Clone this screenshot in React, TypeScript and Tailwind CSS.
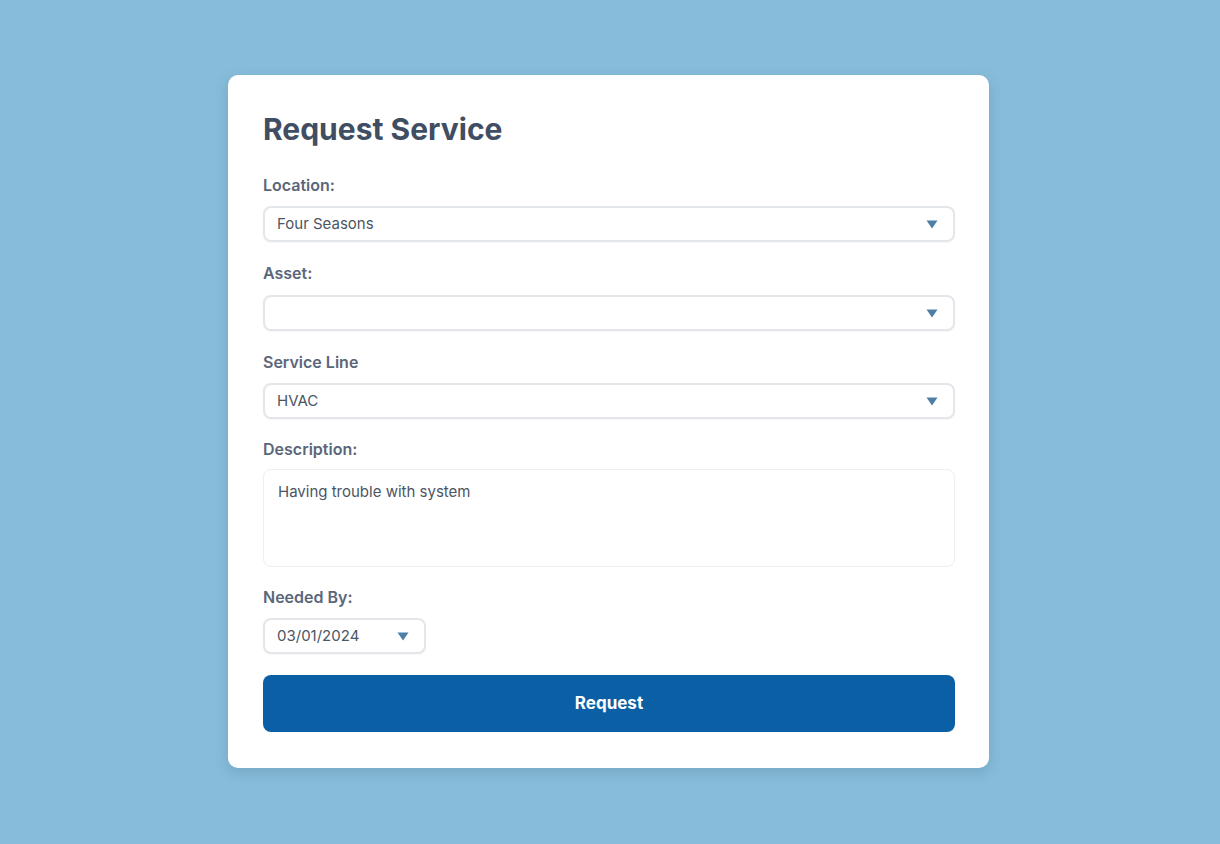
import React from "react"

const Caret = () => (
  <svg width="12" height="9" viewBox="0 0 12 9" className="shrink-0">
    <path d="M0.5 0.5 H11.5 L6 8.5 Z" fill="#4d7ea6" />
  </svg>
)

const Label = ({ children }: { children: React.ReactNode }) => (
  <div className="text-[16px] leading-5 font-semibold text-[#5b6679]">{children}</div>
)

const Select = ({ value, className = "" }: { value?: string; className?: string }) => (
  <div
    className={`flex items-center justify-between h-9 rounded-lg border-2 border-[#e3e6eb] bg-white pl-[12px] pr-[15px] text-[15px] text-[#4b5563] shadow-[0_1px_2px_rgba(0,0,0,0.04)] ${className}`}
  >
    <span>{value}</span>
    <Caret />
  </div>
)

export default function App() {
  return (
    <div
      className="min-h-screen w-full bg-[#87bdda] pt-[75px] pl-[228px]"
      style={{ fontFamily: "Inter, 'Noto Sans', sans-serif" }}
    >
      <div className="w-[761px] h-[693px] bg-white rounded-[10px] shadow-[0_4px_14px_rgba(30,60,90,0.18)] px-[35px] pt-[34px]">
        <h1 className="text-[30px] leading-[40px] font-bold text-[#3f4e62]">Request Service</h1>

        <div className="mt-[26px]">
          <Label>Location:</Label>
          <Select value="Four Seasons" className="mt-[11px] w-[692px]" />
        </div>

        <div className="mt-[21px]">
          <Label>Asset:</Label>
          <Select value="" className="mt-[12px] w-[692px]" />
        </div>

        <div className="mt-[21px]">
          <Label>Service Line</Label>
          <Select value="HVAC" className="mt-[11px] w-[692px]" />
        </div>

        <div className="mt-[20px]">
          <Label>Description:</Label>
          <div className="mt-[10px] w-[692px] h-[98px] rounded-lg border border-[#eceef1] pl-[14px] pt-[11px] text-[15px] text-[#4b5563]">
            Having trouble with system
          </div>
        </div>

        <div className="mt-[20px]">
          <Label>Needed By:</Label>
          <Select value="03/01/2024" className="mt-[11px] w-[163px]" />
        </div>

        <button className="mt-[21px] w-[692px] h-[57px] rounded-lg bg-[#0b5fa5] text-white text-[17px] font-bold">
          Request
        </button>
      </div>
    </div>
  )
}
